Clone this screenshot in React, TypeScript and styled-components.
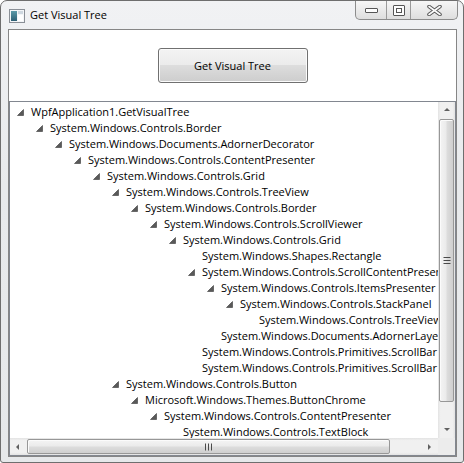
import React from "react";
import styled, { createGlobalStyle } from "styled-components";

const GlobalStyle = createGlobalStyle`
  html, body { margin: 0; padding: 0; background: #ffffff; }
  body { font-family: "Open Sans", "Liberation Sans", sans-serif; }
  * { box-sizing: border-box; }
`;

const Window = styled.div`
  width: 464px;
  height: 463px;
  border: 1px solid #6e6e6e;
  border-radius: 7px 7px 3px 3px;
  background: linear-gradient(#f1f2f4, #e8eaec 40%, #e6e8ea);
  display: flex;
  flex-direction: column;
  overflow: hidden;
`;

const TitleBar = styled.div`
  height: 28px;
  flex: none;
  display: flex;
  align-items: flex-start;
  padding-left: 8px;
`;

const AppIcon = styled.svg`
  margin-top: 8px;
  flex: none;
`;

const Title = styled.div`
  margin-left: 5px;
  margin-top: 6px;
  font-size: 11px;
  line-height: 16px;
  color: #000;
`;

const CaptionGroup = styled.div`
  margin-left: auto;
  margin-right: 5px;
  height: 19px;
  display: flex;
  border: 1px solid #8c8c8c;
  border-top: none;
  border-radius: 0 0 5px 5px;
  overflow: hidden;
  background: linear-gradient(#f6f6f6, #e9e9e9 55%, #dedede);
`;

const CaptionButton = styled.div<{ $w: number }>`
  width: ${(p) => p.$w}px;
  height: 100%;
  display: flex;
  align-items: center;
  justify-content: center;
  & + & { border-left: 1px solid #9a9a9a; }
`;

const Client = styled.div`
  flex: 1;
  margin: 0 6px 5px 7px;
  border: 1px solid #868686;
  background: #ffffff;
  display: flex;
  flex-direction: column;
  min-height: 0;
`;

const ButtonArea = styled.div`
  height: 71px;
  flex: none;
  display: flex;
  justify-content: center;
  align-items: flex-start;
  padding-top: 18px;
`;

const PushButton = styled.button`
  width: 150px;
  height: 35px;
  border: 1px solid #707070;
  border-radius: 3px;
  box-shadow: inset 0 0 0 1px #fbfbfb;
  background: linear-gradient(#f3f3f3 0%, #ebebeb 50%, #dddddd 50%, #cdcdcd 100%);
  font-family: "Open Sans", "Liberation Sans", sans-serif;
  font-size: 11px;
  color: #000;
  padding: 0;
`;

const TreeBox = styled.div`
  flex: 1;
  min-height: 0;
  border: 1px solid #828790;
  display: grid;
  grid-template-columns: 1fr 17px;
  grid-template-rows: 1fr 17px;
  overflow: hidden;
`;

const Viewport = styled.div`
  overflow: hidden;
  padding-top: 2px;
  background: #fff;
  min-width: 0;
  min-height: 0;
`;

const Row = styled.div<{ $level: number }>`
  height: 16px;
  display: flex;
  align-items: center;
  padding-left: ${(p) => 1 + p.$level * 19}px;
  white-space: nowrap;
`;

const Toggle = styled.div`
  width: 19px;
  height: 16px;
  flex: none;
`;

const Label = styled.span`
  padding-left: 1px;
  font-size: 11px;
  line-height: 16px;
  color: #000;
`;

const VScroll = styled.div`
  display: flex;
  flex-direction: column;
  background: linear-gradient(to right, #e3e3e3, #f0f0f0 15%, #f0f0f0 85%, #e3e3e3);
`;

const HScroll = styled.div`
  display: flex;
  background: linear-gradient(#e3e3e3, #f0f0f0 15%, #f0f0f0 85%, #e3e3e3);
`;

const Corner = styled.div`
  background: #ececec;
`;

const ArrowButton = styled.div`
  width: 17px;
  height: 17px;
  flex: none;
  display: flex;
  align-items: center;
  justify-content: center;
`;

const Spacer = styled.div`
  flex: 1;
`;

const VThumb = styled.div<{ $len: number }>`
  height: ${(p) => p.$len}px;
  margin: 0 1px;
  flex: none;
  border: 1px solid #979797;
  border-radius: 2px;
  box-shadow: inset 1px 1px 0 #fbfbfb;
  background: linear-gradient(to right, #f4f4f4 0%, #ebebeb 45%, #dcdcdc 55%, #cfcfcf 100%);
  display: flex;
  align-items: center;
  justify-content: center;
`;

const HThumb = styled.div<{ $len: number }>`
  width: ${(p) => p.$len}px;
  margin: 1px 0;
  flex: none;
  border: 1px solid #979797;
  border-radius: 2px;
  box-shadow: inset 1px 1px 0 #fbfbfb;
  background: linear-gradient(#f4f4f4 0%, #ebebeb 45%, #dcdcdc 55%, #cfcfcf 100%);
  display: flex;
  align-items: center;
  justify-content: center;
`;

type Item = [number, string, boolean];

const items: Item[] = [
  [0, "WpfApplication1.GetVisualTree", true],
  [1, "System.Windows.Controls.Border", true],
  [2, "System.Windows.Documents.AdornerDecorator", true],
  [3, "System.Windows.Controls.ContentPresenter", true],
  [4, "System.Windows.Controls.Grid", true],
  [5, "System.Windows.Controls.TreeView", true],
  [6, "System.Windows.Controls.Border", true],
  [7, "System.Windows.Controls.ScrollViewer", true],
  [8, "System.Windows.Controls.Grid", true],
  [9, "System.Windows.Shapes.Rectangle", false],
  [9, "System.Windows.Controls.ScrollContentPresenter", true],
  [10, "System.Windows.Controls.ItemsPresenter", true],
  [11, "System.Windows.Controls.StackPanel", true],
  [12, "System.Windows.Controls.TreeViewItem", false],
  [10, "System.Windows.Documents.AdornerLayer", false],
  [9, "System.Windows.Controls.Primitives.ScrollBar", false],
  [9, "System.Windows.Controls.Primitives.ScrollBar", false],
  [5, "System.Windows.Controls.Button", true],
  [6, "Microsoft.Windows.Themes.ButtonChrome", true],
  [7, "System.Windows.Controls.ContentPresenter", true],
  [8, "System.Windows.Controls.TextBlock", false],
];

const ExpandedGlyph = () => (
  <svg width="19" height="16" viewBox="0 0 19 16">
    <path d="M12.5 4.5 L12.5 10.5 L6.5 10.5 Z" fill="#595959" stroke="#3a3a3a" strokeWidth="0.6" strokeLinejoin="round" />
  </svg>
);

const Arrow = ({ dir }: { dir: "up" | "down" | "left" | "right" }) => {
  const d = {
    up: "M6 3 L9 6 L3 6 Z",
    down: "M3 4 L9 4 L6 7 Z",
    left: "M3 6 L6 3 L6 9 Z",
    right: "M4 3 L7 6 L4 9 Z",
  }[dir];
  return (
    <svg width="12" height="12" viewBox="0 0 12 12">
      <path d={d} fill="#606060" />
    </svg>
  );
};

const VGrip = () => (
  <svg width="8" height="7" viewBox="0 0 8 7">
    <path d="M0.5 0.5 H7.5 M0.5 3.5 H7.5 M0.5 6.5 H7.5" stroke="#4a4a4a" strokeWidth="1" />
  </svg>
);

const HGrip = () => (
  <svg width="7" height="8" viewBox="0 0 7 8">
    <path d="M0.5 0.5 V7.5 M3.5 0.5 V7.5 M6.5 0.5 V7.5" stroke="#4a4a4a" strokeWidth="1" />
  </svg>
);

export default function App() {
  return (
    <>
      <GlobalStyle />
      <Window>
        <TitleBar>
          <AppIcon width="16" height="14" viewBox="0 0 16 14">
            <defs>
              <linearGradient id="ig" x1="0" y1="0" x2="0" y2="1">
                <stop offset="0" stopColor="#5b9aa8" />
                <stop offset="1" stopColor="#2d5f74" />
              </linearGradient>
            </defs>
            <rect x="0.5" y="0.5" width="15" height="13" fill="#f4f6f8" stroke="#8a8f96" />
            <rect x="2" y="2" width="6" height="10" fill="url(#ig)" />
            <rect x="9" y="2" width="5" height="3" fill="#cfd8e0" />
            <rect x="9" y="6" width="5" height="6" fill="#ffffff" />
          </AppIcon>
          <Title>Get Visual Tree</Title>
          <CaptionGroup>
            <CaptionButton $w={30}>
              <svg width="13" height="5" viewBox="0 0 13 5">
                <rect x="0.5" y="0.5" width="12" height="4" fill="#fdfdfd" stroke="#555" rx="0.5" />
              </svg>
            </CaptionButton>
            <CaptionButton $w={24}>
              <svg width="12" height="11" viewBox="0 0 12 11">
                <rect x="0.5" y="0.5" width="11" height="10" fill="#fdfdfd" stroke="#555" rx="0.5" />
                <rect x="3.5" y="3.5" width="5" height="4" fill="#fdfdfd" stroke="#555" />
              </svg>
            </CaptionButton>
            <CaptionButton $w={47}>
              <svg width="15" height="11" viewBox="0 0 15 11">
                <path d="M2 1.5 L13 9.5 M13 1.5 L2 9.5" stroke="#585858" strokeWidth="3.6" strokeLinecap="round" />
                <path d="M2 1.5 L13 9.5 M13 1.5 L2 9.5" stroke="#fafafa" strokeWidth="1.6" strokeLinecap="round" />
              </svg>
            </CaptionButton>
          </CaptionGroup>
        </TitleBar>
        <Client>
          <ButtonArea>
            <PushButton>Get Visual Tree</PushButton>
          </ButtonArea>
          <TreeBox>
            <Viewport>
              {items.map(([level, text, expandable], i) => (
                <Row key={i} $level={level}>
                  <Toggle>{expandable ? <ExpandedGlyph /> : null}</Toggle>
                  <Label>{text}</Label>
                </Row>
              ))}
            </Viewport>
            <VScroll>
              <ArrowButton>
                <Arrow dir="up" />
              </ArrowButton>
              <VThumb $len={283}>
                <VGrip />
              </VThumb>
              <Spacer />
              <ArrowButton>
                <Arrow dir="down" />
              </ArrowButton>
            </VScroll>
            <HScroll>
              <ArrowButton>
                <Arrow dir="left" />
              </ArrowButton>
              <HThumb $len={363}>
                <HGrip />
              </HThumb>
              <Spacer />
              <ArrowButton>
                <Arrow dir="right" />
              </ArrowButton>
            </HScroll>
            <Corner />
          </TreeBox>
        </Client>
      </Window>
    </>
  );
}
